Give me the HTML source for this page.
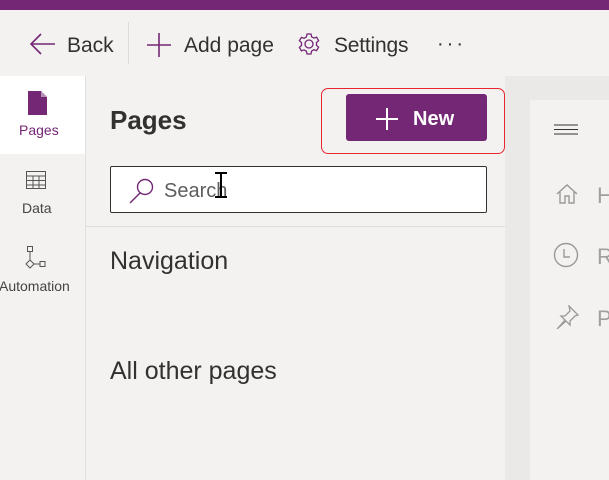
<!DOCTYPE html>
<html><head><style>
*{margin:0;padding:0;box-sizing:border-box}
body{width:609px;height:480px;overflow:hidden;background:#f3f2f1;font-family:"Segoe UI","Liberation Sans",sans-serif;color:#323130;position:relative}
.a{position:absolute}
</style></head><body>
<div class="a" style="left:0;top:0;width:609px;height:10px;background:#742774"></div>
<div class="a" style="left:0;top:10px;width:609px;height:66px;background:#f3f2f1"></div>
<!-- toolbar -->
<svg class="a" style="left:29px;top:32px" width="28" height="24" viewBox="0 0 28 24"><path d="M26 12H3M12 2L2 12l10 10" fill="none" stroke="#742774" stroke-width="1.6"/></svg>
<div class="a" style="left:67px;top:34px;font-size:21px">Back</div>
<div class="a" style="left:128px;top:22px;width:1px;height:42px;background:#dcdcdc"></div>
<svg class="a" style="left:146px;top:32px" width="26" height="26"><path d="M13 1v24M1 13h24" stroke="#742774" stroke-width="1.6"/></svg>
<div class="a" style="left:184px;top:34px;font-size:21px">Add page</div>
<svg class="a" style="left:297px;top:32px" width="24" height="24" viewBox="0 0 24 24"><circle cx="12" cy="12" r="4" fill="none" stroke="#742774" stroke-width="1.3"/><path d="M10 2h4l.6 2.8 2.3 1.3 2.7-.9 2 3.4-2.1 1.9v2.8l2.1 1.9-2 3.4-2.7-.9-2.3 1.3L14 22h-4l-.6-2.8-2.3-1.3-2.7.9-2-3.4 2.1-1.9v-2.8L2.4 8.8l2-3.4 2.7.9 2.3-1.3z" fill="none" stroke="#742774" stroke-width="1.3"/></svg>
<div class="a" style="left:334px;top:34px;font-size:21px;letter-spacing:-0.2px">Settings</div>
<div class="a" style="left:437px;top:33px;font-size:20px;letter-spacing:3px">···</div>
<!-- rail -->
<div class="a" style="left:0;top:76px;width:85px;height:78px;background:#fff"></div>
<div class="a" style="left:85px;top:76px;width:1px;height:404px;background:#e1dfdd"></div>
<svg class="a" style="left:28px;top:91px" width="20" height="24"><path d="M0 0h13l6 6v18H0z" fill="#742774"/><path d="M13 0v6h6" fill="#b592b5"/></svg>
<div class="a" style="left:19px;top:122px;font-size:14px;color:#742774">Pages</div>
<svg class="a" style="left:26px;top:171px" width="20" height="18"><rect x=".5" y=".5" width="19" height="17" fill="none" stroke="#555"/><path d="M.5 5h19M.5 9.5h19M.5 14h19M7 5v13M13 5v13" stroke="#555"/></svg>
<div class="a" style="left:22px;top:200px;font-size:14px;color:#444">Data</div>
<svg class="a" style="left:25px;top:246px" width="24" height="24"><rect x="2.5" y=".5" width="5" height="5" fill="none" stroke="#555"/><path d="M5 5.5v8M1 18l4-4 4 4-4 4z M9 18h6" fill="none" stroke="#555"/><rect x="15" y="15.5" width="5" height="5" fill="none" stroke="#555"/></svg>
<div class="a" style="left:-1px;top:278px;font-size:14px;color:#444">Automation</div>
<!-- panel -->
<div class="a" style="left:110px;top:105px;font-size:26px;font-weight:bold">Pages</div>
<div class="a" style="left:321px;top:88px;width:184px;height:66px;border:1.5px solid #e8262d;border-radius:7px"></div>
<div class="a" style="left:346px;top:94px;width:141px;height:47px;background:#742774;border-radius:3px"></div>
<svg class="a" style="left:375px;top:107px" width="24" height="24"><path d="M12 1v22M1 12h22" stroke="#fff" stroke-width="2"/></svg>
<div class="a" style="left:413px;top:108px;font-size:20px;font-weight:bold;color:#fff">New</div>
<div class="a" style="left:110px;top:166px;width:377px;height:47px;background:#fff;border:1px solid #323130;border-radius:2px"></div>
<svg class="a" style="left:128px;top:176px" width="28" height="30"><circle cx="17" cy="11" r="7.5" fill="none" stroke="#742774" stroke-width="1.4"/><path d="M12 17L2 27" stroke="#742774" stroke-width="1.4"/></svg>
<div class="a" style="left:164px;top:180px;font-size:20px;color:#605e5c">Search</div>
<svg class="a" style="left:213px;top:172px" width="16" height="26"><path d="M2 1h12M8 1v24M2 25h12" stroke="#000" stroke-width="2"/></svg>
<div class="a" style="left:86px;top:226px;width:419px;height:1px;background:#dcdcdc"></div>
<div class="a" style="left:110px;top:247px;font-size:25px">Navigation</div>
<div class="a" style="left:110px;top:357px;font-size:25px">All other pages</div>
<!-- right -->
<div class="a" style="left:505px;top:76px;width:104px;height:404px;background:#eae9e8"></div>
<div class="a" style="left:530px;top:100px;width:79px;height:380px;background:#f3f2f1"></div>
<svg class="a" style="left:554px;top:124px" width="26" height="12"><path d="M0 1h24M0 5.5h24M0 10h24" stroke="#333" stroke-width="1"/></svg>
<svg class="a" style="left:555px;top:182px" width="24" height="24"><path d="M2 12L12 3l10 9M5 10v11h5v-7h4v7h5V10" fill="none" stroke="#999" stroke-width="1.4"/></svg>
<div class="a" style="left:597px;top:183px;font-size:22px;color:#a19f9d">H</div>
<svg class="a" style="left:553px;top:242px" width="26" height="26"><circle cx="13" cy="13" r="11.5" fill="none" stroke="#999" stroke-width="1.4"/><path d="M11 7v8h6" fill="none" stroke="#999" stroke-width="1.4"/></svg>
<div class="a" style="left:597px;top:244px;font-size:22px;color:#a19f9d">R</div>
<svg class="a" style="left:555px;top:305px" width="24" height="24"><path d="M14 1l9 9-3 1-5 5 0 4-4-4-9 8 8-9-4-4h4l5-5z" fill="none" stroke="#999" stroke-width="1.3"/></svg>
<div class="a" style="left:597px;top:306px;font-size:22px;color:#a19f9d">P</div>
</body></html>
